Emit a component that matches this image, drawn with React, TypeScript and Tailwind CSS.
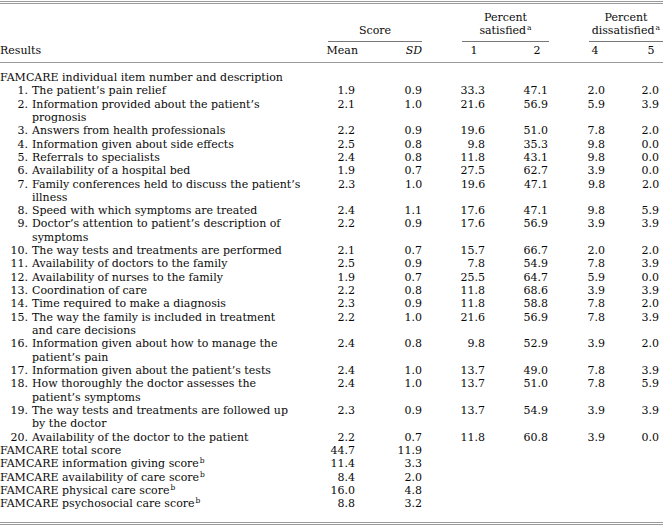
import React from "react";

type Item = { n: number; lines: string[]; v: string[] };

const items: Item[] = [
  { n: 1, lines: ["The patient’s pain relief"], v: ["1.9", "0.9", "33.3", "47.1", "2.0", "2.0"] },
  { n: 2, lines: ["Information provided about the patient’s", "prognosis"], v: ["2.1", "1.0", "21.6", "56.9", "5.9", "3.9"] },
  { n: 3, lines: ["Answers from health professionals"], v: ["2.2", "0.9", "19.6", "51.0", "7.8", "2.0"] },
  { n: 4, lines: ["Information given about side effects"], v: ["2.5", "0.8", "9.8", "35.3", "9.8", "0.0"] },
  { n: 5, lines: ["Referrals to specialists"], v: ["2.4", "0.8", "11.8", "43.1", "9.8", "0.0"] },
  { n: 6, lines: ["Availability of a hospital bed"], v: ["1.9", "0.7", "27.5", "62.7", "3.9", "0.0"] },
  { n: 7, lines: ["Family conferences held to discuss the patient’s", "illness"], v: ["2.3", "1.0", "19.6", "47.1", "9.8", "2.0"] },
  { n: 8, lines: ["Speed with which symptoms are treated"], v: ["2.4", "1.1", "17.6", "47.1", "9.8", "5.9"] },
  { n: 9, lines: ["Doctor’s attention to patient’s description of", "symptoms"], v: ["2.2", "0.9", "17.6", "56.9", "3.9", "3.9"] },
  { n: 10, lines: ["The way tests and treatments are performed"], v: ["2.1", "0.7", "15.7", "66.7", "2.0", "2.0"] },
  { n: 11, lines: ["Availability of doctors to the family"], v: ["2.5", "0.9", "7.8", "54.9", "7.8", "3.9"] },
  { n: 12, lines: ["Availability of nurses to the family"], v: ["1.9", "0.7", "25.5", "64.7", "5.9", "0.0"] },
  { n: 13, lines: ["Coordination of care"], v: ["2.2", "0.8", "11.8", "68.6", "3.9", "3.9"] },
  { n: 14, lines: ["Time required to make a diagnosis"], v: ["2.3", "0.9", "11.8", "58.8", "7.8", "2.0"] },
  { n: 15, lines: ["The way the family is included in treatment", "and care decisions"], v: ["2.2", "1.0", "21.6", "56.9", "7.8", "3.9"] },
  { n: 16, lines: ["Information given about how to manage the", "patient’s pain"], v: ["2.4", "0.8", "9.8", "52.9", "3.9", "2.0"] },
  { n: 17, lines: ["Information given about the patient’s tests"], v: ["2.4", "1.0", "13.7", "49.0", "7.8", "3.9"] },
  { n: 18, lines: ["How thoroughly the doctor assesses the", "patient’s symptoms"], v: ["2.4", "1.0", "13.7", "51.0", "7.8", "5.9"] },
  { n: 19, lines: ["The way tests and treatments are followed up", "by the doctor"], v: ["2.3", "0.9", "13.7", "54.9", "3.9", "3.9"] },
  { n: 20, lines: ["Availability of the doctor to the patient"], v: ["2.2", "0.7", "11.8", "60.8", "3.9", "0.0"] },
];

const summary: { label: string; sup: boolean; v: string[] }[] = [
  { label: "FAMCARE total score", sup: false, v: ["44.7", "11.9"] },
  { label: "FAMCARE information giving score", sup: true, v: ["11.4", "3.3"] },
  { label: "FAMCARE availability of care score", sup: true, v: ["8.4", "2.0"] },
  { label: "FAMCARE physical care score", sup: true, v: ["16.0", "4.8"] },
  { label: "FAMCARE psychosocial care score", sup: true, v: ["8.8", "3.2"] },
];

const colCls = [
  "w-[60px] pr-[5px]",
  "w-[65px] pr-[3px]",
  "w-[65px] pr-[5px]",
  "w-[65px] pr-[7px]",
  "w-[55px] pr-[5px]",
  "w-[53px] pr-[4px]",
];

function Cells({ v }: { v: string[] }) {
  return (
    <>
      {colCls.map((c, i) => (
        <div key={i} className={`${c} shrink-0 text-right`}>
          {v[i] ?? ""}
        </div>
      ))}
    </>
  );
}

function Sup({ children }: { children: React.ReactNode }) {
  return <span className="text-[7.5px] leading-none align-[4px] ml-[1px]">{children}</span>;
}

export default function App() {
  return (
    <div
      className="w-[663px] h-[526px] bg-white text-[#0a0a0a] text-[11px] leading-[13.33px] overflow-hidden"
      style={{ fontFamily: '"DejaVu Serif", "Liberation Serif", serif' }}
    >
      <div className="mt-[1px] h-[3px] border-y border-[#9a9a9a]" />
      {/* header row 1 */}
      <div className="flex pt-[7px]">
        <div className="w-[328px] shrink-0" />
        <div className="w-[94px] shrink-0 flex flex-col">
          <div className="h-[13.33px]" />
          <div className="text-center pb-[3.5px] border-b border-[#777]">Score</div>
        </div>
        <div className="w-[40px] shrink-0" />
        <div className="w-[87px] shrink-0 text-center border-b border-[#777] pb-[3.5px]">
          <div>Percent</div>
          <div className="whitespace-nowrap">
            satisfied<Sup>a</Sup>
          </div>
        </div>
        <div className="w-[40px] shrink-0" />
        <div className="w-[74px] shrink-0 border-b border-[#777] pb-[3.5px]">
          <div className="text-center">Percent</div>
          <div className="whitespace-nowrap text-right pr-[3px]">
            dissatisfied<Sup>a</Sup>
          </div>
        </div>
      </div>
      {/* header row 2 */}
      <div className="flex pt-[2px] pb-[5px] border-b border-[#9a9a9a]">
        <div className="flex-1">Results</div>
        <div className="w-[60px] shrink-0 text-right pr-[2px]">Mean</div>
        <div className="w-[65px] shrink-0 text-right pr-[3px] italic">SD</div>
        <div className="w-[65px] shrink-0 text-right pr-[12.5px]">1</div>
        <div className="w-[65px] shrink-0 text-right pr-[14.5px]">2</div>
        <div className="w-[55px] shrink-0 text-right pr-[11.5px]">4</div>
        <div className="w-[53px] shrink-0 text-right pr-[8.5px]">5</div>
      </div>
      {/* body */}
      <div className="pt-[7.4px]">
        <div className="whitespace-nowrap">FAMCARE individual item number and description</div>
        {items.map((it) => (
          <div key={it.n} className="flex">
            <div className="flex-1 flex whitespace-nowrap">
              <div className="w-[28px] shrink-0 text-right">{it.n}.</div>
              <div className="pl-[4px]">
                {it.lines.map((l, i) => (
                  <div key={i}>{l}</div>
                ))}
              </div>
            </div>
            <Cells v={it.v} />
          </div>
        ))}
        {summary.map((s) => (
          <div key={s.label} className="flex">
            <div className="flex-1 whitespace-nowrap">
              {s.label}
              {s.sup && <Sup>b</Sup>}
            </div>
            <Cells v={s.v} />
          </div>
        ))}
      </div>
      <div className="mt-[11.7px] h-[3px] border-y border-[#9a9a9a]" />
    </div>
  );
}
